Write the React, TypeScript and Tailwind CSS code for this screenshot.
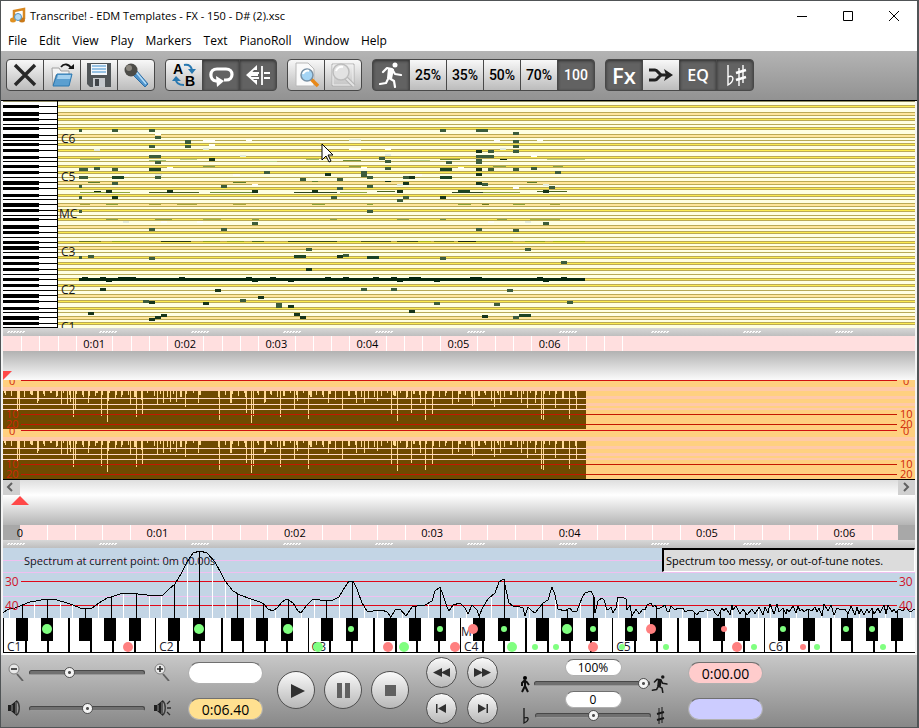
import React from "react";

type Button = { label: string; pressed?: boolean; art: React.ReactNode };

const MENUS = ["File", "Edit", "View", "Play", "Markers", "Text", "PianoRoll", "Window", "Help"];

/* Drawings are recorded on a grid three times finer than the screen. */
const gx = (v: number) => Math.round(v / 3) - 3;
const UI = "font-['Open_Sans','Noto_Sans',sans-serif]";

/* ---------- piano roll ---------- */

const BLACK_ROWS = [34, 54, 73, 100, 119, 148, 166, 185, 214, 232, 261, 280, 299, 327, 345, 373, 392, 411, 440, 457, 487, 505, 523, 553, 571, 600, 619, 638, 666, 685];
const WIDE_ROWS = new Set([54, 119, 261, 327, 392, 457, 600, 666]);
const ROLL_GAPS = [86, 134, 199, 247, 313, 359, 425, 472, 538, 586, 652];
const ry = (v: number) => Math.round((v - 18) / 3);

const MID = "#3c5c3c";
const DEEP = "#0c2c10";
const NOTES: [number, number, number, number?][] = [
  [237, 106, 9], [336, 106, 18], [447, 106, 18], [465, 127, 18], [555, 138, 18], [555, 142, 18], [555, 154, 18], [447, 154, 18],
  [447, 184, 36], [465, 202, 18], [447, 223, 36, 1], [465, 247, 18], [627, 193, 18, 1], [237, 223, 27], [282, 218, 18], [336, 223, 18],
  [237, 247, 27], [336, 247, 36, 1], [336, 265, 18], [792, 230, 18], [900, 253, 18], [237, 274, 9], [318, 289, 18, 1], [663, 274, 18],
  [501, 289, 18, 1], [756, 289, 18, 1], [237, 307, 9], [336, 307, 18, 1], [237, 349, 9], [756, 385, 18], [447, 403, 18], [663, 403, 18],
  [264, 484, 18], [237, 487, 9], [447, 490, 18], [882, 484, 36, 1], [918, 463, 18], [918, 523, 18, 1], [300, 583, 18, 1], [645, 586, 18, 1],
  [429, 619, 18], [447, 622, 18, 1], [264, 655, 18, 1], [447, 673, 18, 1], [465, 667, 18, 1], [483, 661, 18, 1], [609, 625, 18, 1],
  [720, 616, 18], [774, 607, 18, 1], [828, 626, 18], [828, 634, 18], [864, 634, 18, 1], [882, 658, 18, 1], [900, 667, 18, 1],
  [1320, 106, 18], [1428, 106, 36], [1539, 115, 18], [1539, 139, 18], [1539, 154, 18], [1428, 169, 18, 1], [1464, 169, 18], [1539, 169, 18],
  [1428, 184, 54], [1428, 196, 18], [1428, 202, 18], [1137, 190, 18], [1155, 197, 18], [1155, 218, 18], [1338, 202, 18], [1083, 230, 18],
  [1083, 241, 18], [1101, 247, 18], [975, 238, 18, 1], [1011, 253, 18], [1011, 280, 18], [993, 307, 18], [1320, 223, 36, 1], [1320, 247, 36, 1],
  [1209, 247, 18], [1227, 247, 18, 1], [1209, 265, 18, 1], [1428, 223, 18, 1], [1464, 223, 18], [1428, 238, 18, 1], [1539, 223, 18],
  [1593, 218, 18], [1665, 230, 18], [1428, 265, 18, 1], [1446, 268, 18], [1647, 277, 18], [1629, 289, 18, 1], [1191, 289, 18, 1],
  [936, 289, 18, 1], [1374, 289, 36, 1], [1101, 274, 18], [1209, 307, 18], [1320, 307, 18, 1], [1191, 316, 18], [1101, 349, 18],
  [1629, 385, 18], [1428, 403, 18], [1539, 406, 18], [1575, 463, 18], [1683, 502, 18], [1011, 484, 18, 1], [1029, 481, 18],
  [1101, 487, 36, 1], [1320, 490, 18], [1083, 583, 18], [1173, 583, 18], [1521, 586, 18], [1302, 625, 18], [1482, 628, 18],
  [1701, 622, 18], [1227, 649, 18, 1], [1446, 664, 18, 1], [1539, 667, 18], [1557, 661, 36, 1],
];
const THREADS: [number, number, number, string][] = [
  [239, 193, 60, "#9fc070"], [447, 196, 50, "#9fc070"], [540, 193, 50, "#b9d08a"], [780, 197, 50, "#b9d08a"], [918, 193, 40, "#9fc070"],
  [1030, 195, 54, "#6e8f3a"], [1230, 195, 60, "#b9d08a"], [1320, 193, 60, "#6e8f3a"], [1500, 193, 20, DEEP], [1640, 193, 115, "#b9d08a"],
  [610, 214, 36, "#8ba33c"], [1047, 214, 36, "#8ba33c"], [1480, 214, 40, "#8ba33c"], [1660, 214, 30, "#8ba33c"],
  [264, 261, 36, "#5f7d2a"], [700, 262, 38, "#5f7d2a"], [936, 259, 18, "#5f7d2a"], [1155, 259, 18, DEEP], [1580, 262, 30, "#5f7d2a"],
  [239, 291, 150, "#90a83c"], [282, 289, 20, DEEP], [447, 291, 150, "#4b6420"], [630, 290, 125, "#6e8f3a"], [882, 290, 130, "#30481c"],
  [1020, 290, 80, "#90a83c"], [1130, 289, 55, "#4b6420"], [1356, 292, 100, "#30481c"], [1450, 290, 110, "#90a83c"], [1610, 289, 90, "#4b6420"],
  [239, 326, 30, "#a8a840"], [318, 326, 36, "#8ba33c"], [447, 326, 36, "#a8a840"], [530, 326, 60, "#a8a840"], [700, 326, 40, "#a8a840"],
  [936, 327, 40, "#8ba33c"], [1101, 326, 18, "#8ba33c"], [1374, 326, 40, "#8ba33c"], [1446, 328, 20, "#6e7c20"], [1540, 328, 36, "#8ba33c"], [1650, 326, 30, "#a8a840"],
  [318, 373, 36, "#8ba33c"], [465, 373, 50, "#8ba33c"], [610, 373, 54, "#a3b840"], [756, 373, 20, "#8ba33c"], [990, 373, 20, "#8ba33c"],
  [1191, 373, 36, "#8ba33c"], [1320, 373, 18, "#6e8f3a"], [1490, 373, 30, "#8ba33c"], [1590, 373, 90, "#a3b840"],
  [237, 439, 66, "#6b7420"], [336, 439, 54, "#8f9e28"], [483, 439, 90, "#2c3a10"], [610, 439, 50, "#8f9e28"], [680, 439, 50, "#8f9e28"],
  [756, 439, 36, "#4b6420"], [864, 439, 146, "#3c4c14"], [1020, 439, 60, "#a3b020"], [1083, 439, 90, "#4b5418"], [1191, 439, 64, "#3c4c14"],
  [1255, 439, 40, "#a3b020"], [1302, 439, 60, "#6b7420"], [1374, 439, 54, "#1c280c"], [1428, 439, 110, "#8f9e28"], [1575, 439, 60, "#8f9e28"], [1660, 439, 95, "#a3b020"],
];
const GLINTS: [number, number, number][] = [
  [282, 161, 18], [465, 115, 18], [610, 136, 36], [610, 160, 18], [627, 148, 18], [738, 133, 18], [720, 181, 18], [501, 217, 18], [370, 236, 18],
  [465, 236, 20], [700, 236, 20], [756, 268, 18], [370, 379, 18], [483, 379, 18], [590, 378, 18], [1047, 133, 36], [1047, 160, 36], [1155, 160, 18],
  [1155, 178, 18], [1482, 136, 18], [1610, 133, 18], [1500, 160, 18], [1593, 181, 18], [1083, 217, 18], [1191, 268, 18], [1539, 277, 18], [1464, 379, 18],
  [1576, 379, 18], [1247, 236, 18], [1373, 217, 18], [1629, 268, 18],
];
const BASS_UP = [246, 300, 355, 373, 390, 537, 738, 810, 975, 1029, 1119, 1173, 1227, 1245, 1410, 1428, 1611, 1683];
const BASS_DOWN = [318, 756, 864, 1191, 1302, 1629];
const OCTAVE_TAGS: [string, number][] = [["C6", 143], ["C5", 181], ["MC", 218], ["C3", 256], ["C2", 294], ["C1", 331]];

function PianoRoll() {
  return (
    <svg className="block h-[227px] w-full bg-[#ffffe2]" shapeRendering="crispEdges">
      <title>Piano roll</title>
      {BLACK_ROWS.map((c) => {
        const h = WIDE_ROWS.has(c) ? 4 : 3;
        return (
          <g key={c}>
            <rect x="0" y={ry(c) - 1} width="100%" height={h} fill="#bcaa54" />
            <rect x="0" y={ry(c)} width="100%" height={h - 2} fill={h === 4 ? "#ffe69c" : "#fcec50"} />
          </g>
        );
      })}
      {ROLL_GAPS.map((c) => <rect key={c} x="0" y={ry(c)} width="100%" height="1" fill="#b8aa58" />)}
      <rect x="0" y="0" width="100%" height="1" fill="#8c8860" />
      {GLINTS.map(([x, y, w], i) => <rect key={i} x={gx(x)} y={ry(y)} width={w / 3} height="2" fill={i % 3 ? "#fffffa" : "#e4ecdc"} />)}
      {THREADS.map(([x, y, w, c], i) => <rect key={i} x={gx(x)} y={ry(y)} width={Math.round(w / 3)} height="1" fill={c} />)}
      {NOTES.map(([x, y, w, d], i) => <rect key={i} x={gx(x)} y={ry(y) - 1} width={w / 3} height="3" fill={d ? (w === 18 ? "#16341a" : "#1c4424") : MID} />)}
      <rect x={gx(237)} y={ry(552) - 1} width="506" height="3" fill="#04240e" />
      {BASS_UP.map((x) => <rect key={x} x={gx(x)} y={ry(552) - 2} width="6" height="3" fill="#04240e" />)}
      {BASS_DOWN.map((x) => <rect key={x} x={gx(x)} y={ry(552)} width="6" height="3" fill="#04240e" />)}
      {/* keyboard at the left edge */}
      <rect x="0" y="1" width="55" height="226" fill="#fff" />
      <rect x="54" y="0" width="1" height="227" fill="#000" />
      {BLACK_ROWS.map((c) => (
        <g key={c}>
          <rect x="0" y={ry(c) - 1} width="36" height={WIDE_ROWS.has(c) ? 4 : 3} />
          <rect x="36" y={ry(c)} width="19" height="1" />
        </g>
      ))}
      {ROLL_GAPS.map((c) => <rect key={c} x="0" y={ry(c)} width="55" height="1" />)}
      <rect x="0" y="226" width="55" height="1" />
      {OCTAVE_TAGS.map(([t, y]) => (
        <text key={t} x={t === "MC" ? 56 : 58} y={y - 101} className={`${UI} text-[12px]`} fill="#181818">{t}</text>
      ))}
    </svg>
  );
}

/* ---------- rulers and splitters ---------- */

function Splitter() {
  return (
    <svg className="block h-2 w-full bg-linear-to-b from-[#d8d8d8] to-[#bebebe]" aria-hidden="true" shapeRendering="crispEdges">
      {Array.from({ length: 10 }, (_, g) =>
        Array.from({ length: 6 }, (_, i) => (
          <g key={`${g}-${i}`}>
            <rect x={5 + g * 92 + i * 3} y="3" width="2" height="1" fill="#fff" />
            <rect x={4 + g * 92 + i * 3} y="4" width="2" height="1" fill="#f4f4f4" />
          </g>
        )),
      )}
    </svg>
  );
}

function Ruler({ start, second, seconds, last, zero }: { start: number; second: number; seconds: number; last: number; zero?: boolean }) {
  const labels = Array.from({ length: seconds }, (_, i) => i + 1);
  return (
    <svg className="block h-[15px] w-full bg-[#ffdfdf]" shapeRendering="crispEdges">
      <title>Time ruler</title>
      {Array.from({ length: last }, (_, i) => i + 1).filter((k) => k % 5 !== 0 || k / 5 > seconds).map((k) => (
        <rect key={k} x={Math.round(start + (k * second) / 5)} y="0" width="1" height="15" fill="#fff" />
      ))}
      {zero && <rect x="0" y="0" width={start} height="15" fill="#a8a8a8" />}
      {zero && <rect x="100%" y="0" width="17" height="15" fill="#a8a8a8" transform="translate(-17 0)" />}
      {zero && <text x={start} y="12" textAnchor="middle" className={`${UI} text-[11px]`}>0</text>}
      {labels.map((s) => (
        <text key={s} x={start + s * second} y="12" textAnchor="middle" className={`${UI} text-[11px]`}>{`0:0${s}`}</text>
      ))}
    </svg>
  );
}

/* ---------- waveform ---------- */

const SPIKES: [number, number][] = [
  [17, 20], [19, 19], [38, 10], [61, 13], [67, 14], [73, 26], [75, 19], [88, 12], [101, 25], [107, 31], [115, 8], [130, 14], [136, 26], [142, 24], [157, 13],
  [163, 12], [170, 11], [176, 11], [185, 16], [198, 12], [219, 29], [230, 12], [246, 22], [251, 32], [253, 25], [264, 12], [280, 26], [294, 18],
  [308, 28], [328, 12], [342, 18], [356, 12], [364, 12], [377, 10], [391, 23], [397, 30], [411, 22], [425, 29], [432, 23], [452, 14], [472, 15],
  [474, 14], [494, 16], [500, 12], [521, 12], [527, 17], [535, 12], [541, 28], [543, 29], [555, 17], [569, 28], [576, 18],
];
const NICKS = Array.from({ length: 120 }, (_, i) => {
  const x = 4 + ((i * 389) % 577);
  return { x, d: 2 + ((i * 37) % 11) * (i % 4 === 0 ? 1 : 0.4), w: i % 5 === 0 ? 2 : 1 };
}).filter((n) => n.x < 205 || n.x > 216);

function Channel({ top }: { top: number }) {
  return (
    <g transform={`translate(0 ${top})`}>
      {[[7, 4], [16, 3], [23, 3], [28, 2]].map(([y, h]) => <rect key={y} x="0" y={y} width="100%" height={h} fill="#ffc9a8" />)}
      <rect x="0" y="11" width="583" height="38" fill="#6f4a00" />
      {NICKS.map((n, i) => <rect key={i} x={n.x - 3} y="11" width={n.w} height={Math.round(n.d)} fill="#ffdc98" />)}
      {SPIKES.map(([x, d]) => <rect key={x} x={x - 3} y="11" width="1" height={d} fill="#ffd890" />)}
      {[18, 24, 29].map((y) => <rect key={y} x="0" y={y} width="583" height="1" fill="#ffd8c8" />)}
      {[0, 34, 44].map((y) => <rect key={y} x="18" y={y} height="1" fill={y ? "#c41800" : "#d01010"} className="w-[calc(100%-36px)]" />)}
      <g className={`${UI} text-[11px]`} fill="#d02808">
        <text x="6" y="5">0</text>
        <text x="3" y="38">10</text>
        <text x="3" y="48">20</text>
        <text x="100%" y="5" dx="-12">0</text>
        <text x="100%" y="38" dx="-15">10</text>
        <text x="100%" y="48" dx="-15">20</text>
      </g>
    </g>
  );
}

/* ---------- spectrum ---------- */

const CURVE: [number, number][] = [
  [10, 220], [20, 210], [28, 208], [45, 203], [66, 196], [90, 186], [107, 182], [142, 178], [170, 180], [200, 188], [220, 196], [240, 204], [256, 206], [275, 203],
  [296, 190], [320, 175], [334, 170], [360, 162], [385, 160], [415, 163], [440, 166], [488, 166], [505, 150], [524, 132], [545, 96], [560, 66], [580, 40], [600, 33],
  [622, 38], [645, 65], [665, 105], [676, 124], [700, 152], [720, 166], [752, 178], [780, 187], [792, 192], [805, 208], [818, 213], [830, 205], [845, 185], [862, 178],
  [880, 190], [893, 212], [902, 220], [912, 208], [922, 194], [938, 178], [960, 181], [980, 182], [1000, 180], [1018, 170], [1035, 142], [1048, 124], [1058, 124],
  [1070, 148], [1085, 190], [1100, 212], [1120, 213], [1145, 209], [1160, 217], [1172, 230], [1185, 210], [1200, 206], [1218, 229], [1235, 202], [1250, 199],
  [1275, 194], [1295, 182], [1305, 152], [1320, 142], [1330, 165], [1340, 200], [1347, 214], [1360, 196], [1380, 189], [1395, 205], [1403, 221], [1415, 196],
  [1430, 210], [1438, 228], [1450, 200], [1465, 178], [1485, 160], [1498, 125], [1512, 118], [1518, 150], [1528, 190], [1540, 197], [1552, 199], [1568, 205],
  [1575, 229], [1585, 200], [1595, 212], [1605, 220], [1618, 203], [1630, 188], [1645, 180], [1657, 142], [1665, 165], [1675, 208], [1695, 212], [1710, 205],
  [1720, 216], [1730, 213], [1745, 175], [1755, 158], [1772, 152], [1782, 170], [1786, 218], [1795, 182], [1805, 175], [1813, 180], [1820, 210], [1827, 206],
  [1832, 200], [1839, 220], [1847, 205], [1855, 172], [1867, 171], [1877, 176], [1882, 210], [1889, 196], [1895, 228], [1907, 208], [1917, 222], [1930, 206],
  [1936, 210], [1942, 196], [1952, 190], [1958, 200], [1965, 196], [1974, 208], [1985, 200], [1995, 194], [2001, 214], [2008, 216], [2014, 199], [2024, 210],
  [2034, 203], [2048, 204], [2056, 216], [2066, 210], [2080, 214], [2090, 226], [2100, 214], [2110, 216], [2118, 206], [2126, 214], [2138, 208], [2146, 220],
];
/* Above the fifth octave the trace breaks up into narrow uneven peaks. */
const TAIL: [number, number][] = (() => {
  const pts: [number, number][] = [];
  let seed = 7;
  const next = () => (seed = (seed * 1103 + 377) % 4096) / 4096;
  for (let x = 2153, up = false; x < 2745; x += 4 + next() * 10, up = !up) {
    const peak = next();
    pts.push([x, up ? 207 - peak * peak * 18 : 210 + peak * 17]);
  }
  return [...pts, [2746, 208]];
})();
const TRACE = [...CURVE, ...TAIL];
const sy = (v: number) => Math.round((v - 24) / 3);
const curveY = (x: number) => {
  const t = (x + 3) * 3;
  const i = Math.max(1, TRACE.findIndex((p) => p[0] >= t));
  const [a, b] = [TRACE[i - 1], TRACE[i]];
  return sy(a[1] + ((b[1] - a[1]) * (t - a[0])) / (b[0] - a[0]));
};
const BLACK_PITCH = new Set([1, 3, 6, 8, 10]);

function Spectrum() {
  return (
    <svg className="block h-[70px] w-full bg-[#c3d5e5]" shapeRendering="crispEdges">
      <title>Spectrum</title>
      {[12, 24, 48].map((y) => <rect key={y} x="0" y={y} width="100%" height="1" fill="#f0c0f0" />)}
      {[33, 57].map((y) => <rect key={y} x="18" y={y} height="1" fill="#e00818" className="w-[calc(100%-36px)]" />)}
      {Array.from({ length: 72 }, (_, n) => {
        const x = Math.round(6 + n * 12.69);
        const y = curveY(x);
        return <rect key={n} x={x} y={y} width="1" height={Math.max(0, 70 - y)} fill={BLACK_PITCH.has(n % 12) ? "#000" : "#fff"} />;
      })}
      <polyline points={TRACE.map(([x, y]) => `${gx(x)},${sy(y)}`).join(" ")} fill="none" stroke="#000" strokeWidth="1" />
      <g className={`${UI} text-[12px]`} fill="#d0142c">
        <text x="2" y="38">30</text>
        <text x="2" y="62">40</text>
        <text x="100%" y="38" dx="-16">30</text>
        <text x="100%" y="62" dx="-16">40</text>
      </g>
      <text x="21" y="17" className={`${UI} text-[11px]`} fill="#101420">Spectrum at current point: 0m 00.00s</text>
    </svg>
  );
}

const GREEN = "#80ff80";
const RED = "#ff8080";
const MARKS: [number, number, number, string][] = [
  [47, 11, 5, GREEN], [199, 11, 5, GREEN], [288, 11, 5, GREEN], [351, 11, 3, GREEN], [440, 11, 3, GREEN], [473, 11, 5, RED], [504, 11, 3, GREEN],
  [567, 11, 5, GREEN], [593, 11, 3, GREEN], [630, 11, 3, GREEN], [651, 11, 5, RED], [724, 11, 3, RED], [783, 11, 3, GREEN], [846, 11, 3, GREEN], [872, 11, 3, GREEN],
  [128, 29, 5, RED], [318, 29, 5, GREEN], [388, 29, 5, RED], [404, 29, 5, GREEN], [455, 29, 5, RED], [512, 29, 5, GREEN], [535, 29, 3, GREEN], [556, 29, 3, GREEN],
  [593, 29, 5, RED], [622, 29, 3, GREEN], [666, 29, 3, GREEN], [737, 29, 5, RED], [754, 29, 3, GREEN], [803, 29, 3, RED], [817, 29, 3, GREEN], [883, 29, 3, GREEN],
];

function Keyboard() {
  return (
    <svg className="block h-[37px] w-full bg-white">
      <title>Keyboard</title>
      <g shapeRendering="crispEdges">
        {Array.from({ length: 43 }, (_, k) => <rect key={k} x={Math.round(k * 21.75)} y="0" width={k % 7 === 0 ? 1 : 2} height="35" />)}
        <rect x="0" y="34" width="100%" height="1" />
        {Array.from({ length: 6 }, (_, o) =>
          [13, 38, 76, 101, 126].map((x) => <rect key={`${o}-${x}`} x={Math.round(x + o * 152.3)} y="0" width="12" height="23" />),
        )}
      </g>
      <g className={`${UI} text-[12px]`} fill="#181828">
        {[0, 1, 2, 3, 4, 5].map((o) => <text key={o} x={4 + o * 152.3} y="33">{`C${o + 1}`}</text>)}
        <text x="458" y="18">M</text>
      </g>
      {MARKS.map(([x, y, r, c], i) => <circle key={i} cx={x - 3} cy={y} r={r} fill={c} />)}
    </svg>
  );
}

/* ---------- toolbar ---------- */

const RUNNER = (
  <>
    <circle cx="17" cy="3" r="2.5" fill="currentColor" />
    <path d="M5 10l4-4 5 1 3 5 6 1M14 9l-3 7 5 3 1 6M11 15l-3 6-6 1" fill="none" stroke="currentColor" strokeWidth="2.2" strokeLinejoin="round" strokeLinecap="round" />
    <path d="M10 6l6 1-2 10-5-1z" fill="currentColor" />
  </>
);
const Art = ({ children }: { children: React.ReactNode }) => <svg width="26" height="26" viewBox="0 0 26 26" aria-hidden="true">{children}</svg>;
const Speed = ({ children }: { children: string }) => <span className="font-[Roboto,sans-serif] text-[14px] font-medium">{children}</span>;

const GROUPS: Button[][] = [
  [
    { label: "Close", art: <Art><path d="M3 3l20 20M23 3L3 23" stroke="#282828" strokeWidth="3.4" /></Art> },
    {
      label: "Open",
      art: (
        <Art>
          <path d="M3 6h7l2 3h8v4H7l-3 10z" fill="#f4f4f4" stroke="#a0a0a0" />
          <path d="M8 12h15l-3 12H4z" fill="#5b9fd0" stroke="#2c78b0" />
          <path d="M9 13h13l-1 4H8z" fill="#a4d0ee" />
          <path d="M12 5c3-4 8-3 10 1" fill="none" stroke="#151515" strokeWidth="1.8" />
          <path d="M19 7h6V2z" fill="#151515" />
        </Art>
      ),
    },
    {
      label: "Save",
      art: (
        <Art>
          <path d="M1 1h24v24H4l-3-3z" fill="#505558" />
          <path d="M5 2h16v11H5z" fill="#f4f8fc" />
          <path d="M6 4h14M6 7h14M6 10h14" stroke="#78b0dc" strokeWidth="1.5" />
          <path d="M7 16h12v9H7z" fill="#c4c8cc" />
          <path d="M9 17h4v7H9z" fill="#404448" />
        </Art>
      ),
    },
    {
      label: "Record",
      art: (
        <Art>
          <path d="M9 12l4-4 12 14-3 3z" fill="#4f94cc" stroke="#2e6da4" />
          <path d="M11 12l2-2 10 12" fill="none" stroke="#b4dcf8" strokeWidth="1.6" />
          <circle cx="8" cy="8" r="6.5" fill="#4c4c48" />
          <circle cx="6" cy="6" r="3" fill="#8c8880" />
        </Art>
      ),
    },
  ],
  [
    {
      label: "Swap A and B",
      art: (
        <Art>
          <text x="2" y="12" className="font-['Liberation_Sans',sans-serif] text-[14px] font-bold">A</text>
          <text x="14" y="24" className="font-['Liberation_Sans',sans-serif] text-[14px] font-bold">B</text>
          <path d="M13 3c5-1 7 1 8 5M13 23c-6 0-8-3-8-5" fill="none" stroke="#2878b0" strokeWidth="2" />
          <path d="M17 7h8l-4 5zM1 19l4-5 5 5z" fill="#2878b0" />
        </Art>
      ),
    },
    { label: "Loop", pressed: true, art: <Art><path d="M9 19H8C1 18 1 7 9 7h9c8 0 8 11 0 11h-2" fill="none" stroke="#fff" strokeWidth="3.2" /><path d="M8 14l8 5-7 6z" fill="#fff" /></Art> },
    {
      label: "Split at marker",
      pressed: true,
      art: <Art><path d="M12 3v5H9L5 13l4 5h3v5L1 13z" fill="#fff" /><path d="M6 11h8M6 16h8M19 11h6M19 16h6M5 13h8" stroke="#fff" strokeWidth="2.2" /><path d="M17 4v19" stroke="#fff" strokeWidth="1.8" /></Art>,
    },
  ],
  [
    {
      label: "Zoom to view",
      art: (
        <Art>
          <path d="M3 1h12l6 6v17H3z" fill="#fafafa" stroke="#b8b8b8" />
          <path d="M18 17l7 7" stroke="#e88818" strokeWidth="3.6" />
          <circle cx="14" cy="13" r="6" fill="#a4d4f4" stroke="#7890a4" strokeWidth="1.5" />
          <path d="M10 12c1-3 4-4 6-3" fill="none" stroke="#fff" strokeWidth="2" />
        </Art>
      ),
    },
    {
      label: "Zoom to selection",
      art: (
        <Art>
          <path d="M2 2h22v22H2z" fill="none" stroke="#b0b0b0" />
          <path d="M3 3h20v20H3z" fill="none" stroke="#f0f0f0" />
          <path d="M16 16l8 8" stroke="#b4b4b4" strokeWidth="4" />
          <path d="M16 16l8 8" stroke="#e4e4e4" strokeWidth="2" />
          <circle cx="11" cy="10" r="8" fill="#e2e2e2" stroke="#bcbcbc" strokeWidth="1.5" />
          <path d="M6 9c1-3 4-5 7-4" fill="none" stroke="#fff" strokeWidth="2" />
        </Art>
      ),
    },
  ],
  [
    { label: "Running speed", pressed: true, art: <Art>{RUNNER}</Art> },
    { label: "25%", art: <Speed>25%</Speed> },
    { label: "35%", art: <Speed>35%</Speed> },
    { label: "50%", art: <Speed>50%</Speed> },
    { label: "70%", art: <Speed>70%</Speed> },
    { label: "100", pressed: true, art: <Speed>100</Speed> },
  ],
  [
    { label: "Fx", pressed: true, art: <span className={`${UI} text-[22px] leading-6 font-semibold`}>Fx</span> },
    {
      label: "Mono",
      art: <Art><path d="M1 8h6c3 0 4 5 7 5h5M1 18h6c3 0 4-5 7-5" fill="none" stroke="#202020" strokeWidth="3" /><path d="M16 7l9 6-9 6 2-6z" fill="#202020" /></Art>,
    },
    { label: "EQ", pressed: true, art: <span className={`${UI} text-[16px] leading-5 font-semibold`}>EQ</span> },
    {
      label: "Tuning",
      pressed: true,
      art: (
        <Art>
          <path d="M6 3v20c7-4 6-11 0-8" fill="none" stroke="#fff" strokeWidth="1.4" />
          <path d="M17 6v18M21 3v18" stroke="#fff" strokeWidth="1.4" />
          <path d="M14 11l10-3M14 18l10-3" stroke="#fff" strokeWidth="2.6" />
        </Art>
      ),
    },
  ],
];

function Toolbar() {
  return (
    <div className="flex h-[50px] items-start gap-[10px] border-b border-black bg-linear-to-b from-[#b4b4b4] to-[#929292] px-[5px] pt-2">
      {GROUPS.map((group, g) => (
        <div key={g} className="flex pl-px">
          {group.map((b) => (
            <button
              key={b.label}
              aria-label={b.label}
              aria-pressed={b.pressed}
              className={`-ml-px flex h-8 w-[38px] items-center justify-center border border-[#484848] first:rounded-l-[4px] last:rounded-r-[4px] ${
                b.pressed ? "bg-[#626262] text-white inset-shadow-[0_1px_3px_#303030]" : "bg-linear-to-b from-[#f8f8f8] to-[#bcbcbc] text-black"
              }`}
            >
              {b.art}
            </button>
          ))}
        </div>
      ))}
    </div>
  );
}

/* ---------- bottom controls ---------- */

function Slider({ label, value }: { label: string; value: number }) {
  return (
    <input
      type="range"
      aria-label={label}
      defaultValue={value}
      className="h-3 w-[116px] appearance-none bg-transparent [&::-webkit-slider-runnable-track]:h-[5px] [&::-webkit-slider-runnable-track]:rounded-full [&::-webkit-slider-runnable-track]:border [&::-webkit-slider-runnable-track]:border-[#484848] [&::-webkit-slider-runnable-track]:border-b-[#989898] [&::-webkit-slider-runnable-track]:bg-[#707070] [&::-webkit-slider-thumb]:mt-[-4px] [&::-webkit-slider-thumb]:size-[11px] [&::-webkit-slider-thumb]:appearance-none [&::-webkit-slider-thumb]:rounded-full [&::-webkit-slider-thumb]:border [&::-webkit-slider-thumb]:border-[#505050] [&::-webkit-slider-thumb]:bg-[radial-gradient(circle,#505050_0_1px,#f4f4f4_2px)]"
    />
  );
}

const Field = ({ label, value, className }: { label: string; value: string; className: string }) => (
  <input aria-label={label} defaultValue={value} className={`${className} border border-[#b0b0b0] border-t-[#707070] text-center text-black outline-none`} />
);

function Round({ label, size, children }: { label: string; size: string; children: React.ReactNode }) {
  return (
    <button aria-label={label} className={`${size} flex items-center justify-center rounded-full border border-[#505050] bg-linear-to-b from-[#fafafa] to-[#b8b8b8]`}>
      <svg width="21" height="21" viewBox="0 0 21 21" fill="#303030" aria-hidden="true">{children}</svg>
    </button>
  );
}

const Mini = ({ children }: { children: React.ReactNode }) => <svg width="18" height="18" viewBox="0 0 18 18" className="shrink-0" aria-hidden="true">{children}</svg>;
const Magnifier = ({ plus }: { plus?: boolean }) => (
  <Mini>
    <path d="M10 11l6 7" stroke="#606060" strokeWidth="1.8" />
    <circle cx="7" cy="6" r="5" fill="#e8e8e8" stroke="#808080" />
    <path d={plus ? "M4 6h6M7 3v6" : "M4 6h6"} stroke="#282828" strokeWidth="1.6" />
  </Mini>
);
const Speaker = ({ loud }: { loud?: boolean }) => (
  <Mini>
    <path d="M1 6h3l6-5v16l-6-5H1z" fill="#202020" />
    <path d="M5 6v6M9 3v12" stroke="#909090" />
    <path d="M10 2c3 3 3 11 0 14" fill="none" stroke="#383838" strokeWidth="1.4" />
    {loud && <path d="M14 5l3-3M14 9h4M14 13l3 3" stroke="#303030" strokeWidth="1.3" />}
  </Mini>
);

function Controls() {
  const pill = `h-[22px] w-[75px] rounded-full ${UI} text-[14px]`;
  const small = `h-[17px] w-[57px] rounded-full bg-white ${UI} text-[12px]`;
  return (
    <div className="flex h-[72px] items-start bg-linear-to-b from-[#c8c8c8] to-[#888888] pl-[6px]">
      <div className="flex w-[163px] flex-col gap-[18px] pt-2">
        <div className="flex items-center gap-1"><Magnifier /><Slider label="Zoom" value={33} /><span className="w-1" /><Magnifier plus /></div>
        <div className="flex items-center gap-1"><Speaker /><Slider label="Volume" value={50} /><span className="w-1" /><Speaker loud /></div>
      </div>
      <div className="ml-[18px] flex flex-col gap-[14px] pt-[7px]">
        <Field label="Marker" value="" className={`${pill} bg-white`} />
        <Field label="Length" value="0:06.40" className={`${pill} bg-[#ffe090]`} />
      </div>
      <div className="ml-[14px] flex gap-[9px] pt-4">
        <Round label="Play" size="size-[38px]"><path d="M5 4l14 7-14 7z" /></Round>
        <Round label="Pause" size="size-[38px]"><path d="M4 3h5v15H4zM12 3h5v15h-5z" fill="#606060" /></Round>
        <Round label="Stop" size="size-[38px]"><path d="M5 5h11v11H5z" fill="#606060" /></Round>
      </div>
      <div className="ml-[17px] grid grid-cols-2 gap-x-[10px] gap-y-[5px] pt-[2px]">
        <Round label="Rewind" size="size-[31px]"><path d="M11 6v9l-9-4.5zM19 6v9l-9-4.5z" /></Round>
        <Round label="Fast forward" size="size-[31px]"><path d="M2 6v9l9-4.5zM10 6v9l9-4.5z" /></Round>
        <Round label="Previous" size="size-[31px]"><path d="M15 6v9l-8-4.5zM5 6h1.5v9H5z" /></Round>
        <Round label="Next" size="size-[31px]"><path d="M6 6v9l8-4.5zM14.5 6h1.500v9h-1.500z" /></Round>
      </div>
      <div className="ml-[15px] flex w-[160px] flex-col items-center pt-1">
        <Field label="Speed" value="100%" className={small} />
        <div className="flex h-[15px] items-center">
          <Mini><circle cx="9" cy="3" r="2" /><path d="M9 5L6 8v3M10 6l3 4M9 5v6l-3 6M9 11l3 6" fill="none" stroke="#101010" strokeWidth="2" /></Mini>
          <Slider label="Speed slider" value={100} />
          <svg width="20" height="18" viewBox="0 0 26 26" className="shrink-0 text-[#181818]" aria-hidden="true">{RUNNER}</svg>
        </div>
        <Field label="Transpose" value="0" className={small} />
        <div className="flex h-[15px] items-center">
          <Mini><path d="M7 1v15c5-2 6-7 0-5" fill="none" stroke="#181818" strokeWidth="1.3" /></Mini>
          <Slider label="Transpose slider" value={50} />
          <Mini><path d="M8 1v16M11 0v16" stroke="#181818" /><path d="M6 7l7-2M6 13l7-2" stroke="#181818" strokeWidth="2" /></Mini>
        </div>
      </div>
      <div className="ml-[15px] flex flex-col gap-[14px] pt-[7px]">
        <Field label="Position" value="0:00.00" className={`${pill} bg-[#ffcccc]`} />
        <Field label="Selection" value="" className={`${pill} bg-[#ccccff]`} />
      </div>
    </div>
  );
}

export default function App() {
  return (
    <div className={`relative w-full border border-r-2 border-[#505456] bg-[#f4f4f4] ${UI} text-[12px] text-black`}>
      <header className="flex h-[30px] items-center bg-white pl-[8px]">
        <svg width="18" height="18" viewBox="0 0 18 18" aria-hidden="true">
          <path d="M5 13V4l10-2v10" fill="none" stroke="#d88820" strokeWidth="2.5" />
          <ellipse cx="4" cy="13" rx="3" ry="2.5" fill="#e09020" />
          <ellipse cx="13" cy="13" rx="3" ry="2.5" fill="#c87818" />
          <circle cx="9" cy="10" r="3.5" fill="#b8dcf4" stroke="#5090c0" />
        </svg>
        <h1 className="ml-[3px] text-[11px]">Transcribe! - EDM Templates - FX - 150 - D# (2).xsc</h1>
        <div className="ml-auto flex">
          {[["Minimize", "M0 5.5h10"], ["Maximize", "M.5 .5h9v9h-9z"], ["Close window", "M0 0l10 10M10 0L0 10"]].map(([label, d]) => (
            <button key={label} aria-label={label} className="flex h-[30px] w-[46px] items-center justify-center">
              <svg width="10" height="10" viewBox="0 0 10 10" fill="none" stroke="#000" aria-hidden="true"><path d={d} /></svg>
            </button>
          ))}
        </div>
      </header>
      <nav className="flex h-[20px] items-center gap-3 bg-white pl-[7px] text-[12px]">
        {MENUS.map((m) => <button key={m}>{m}</button>)}
      </nav>
      <Toolbar />
      <main className="px-[2px]">
        <div className="relative">
          <PianoRoll />
          <svg className="absolute top-[42px] left-[318px]" width="13" height="21" viewBox="0 0 13 21" aria-hidden="true">
            <path d="M1 1v16l4-4 3 6 2-1-3-6h5z" fill="#fff" stroke="#000" />
          </svg>
        </div>
        <Splitter />
        <Ruler start={0} second={91.1} seconds={6} last={34} />
        <svg className="block h-[29px] w-full" aria-hidden="true">
          <defs><linearGradient id="fade" x2="0" y2="1"><stop stopColor="#b2b2b2" /><stop offset="1" stopColor="#fafafa" /></linearGradient></defs>
          <rect width="100%" height="29" fill="url(#fade)" />
          <path d="M0 20h9l-9 9z" fill="#ff4848" />
        </svg>
        <svg className="block h-[100px] w-full border-b border-black bg-[#ffd080]" shapeRendering="crispEdges">
          <title>Waveform</title>
          <Channel top={0} />
          <Channel top={50} />
        </svg>
        <div className="flex h-[15px] justify-between bg-linear-to-b from-[#dedede] to-[#ffffff]">
          {[["Scroll left", "M9 3L5 7l4 4"], ["Scroll right", "M6 3l4 4-4 4"]].map(([label, d]) => (
            <button key={label} aria-label={label} className="h-[15px] w-[17px] bg-[#d0d0d0]">
              <svg width="15" height="15" viewBox="0 0 15 15" fill="none" stroke="#606060" strokeWidth="2" aria-hidden="true"><path d={d} /></svg>
            </button>
          ))}
        </div>
        <svg className="block h-[30px] w-full" aria-hidden="true">
          <defs><linearGradient id="rise" x2="0" y2="1"><stop stopColor="#ffffff" /><stop offset="1" stopColor="#b4b4b4" /></linearGradient></defs>
          <rect width="100%" height="30" fill="url(#rise)" />
          <path d="M8 10l9-9 9 9z" fill="#ff4848" />
        </svg>
        <Ruler start={17} second={137.4} seconds={6} last={31} zero />
        <Splitter />
        <section className="relative">
          <Spectrum />
          <p className="absolute top-0 right-0 h-6 w-[253px] border border-t-2 border-l-2 border-white border-t-black border-l-black bg-[#dcdcdc] pl-[2px] text-[11px] leading-[22px] whitespace-nowrap">
            Spectrum too messy, or out-of-tune notes.
          </p>
        </section>
        <Keyboard />
      </main>
      <Controls />
    </div>
  );
}
